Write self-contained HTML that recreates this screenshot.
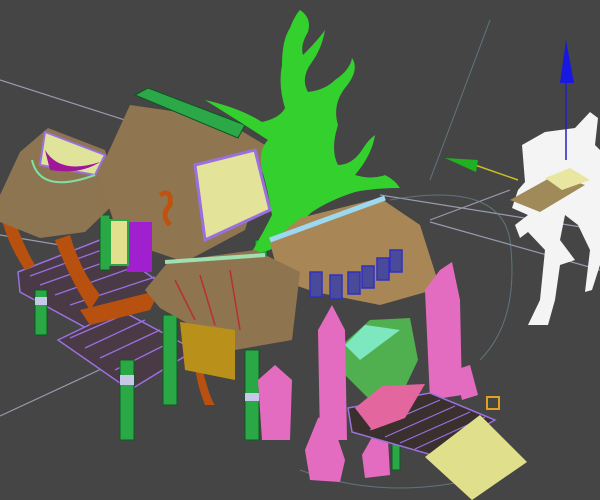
<!DOCTYPE html>
<html><head><meta charset="utf-8"><style>
html,body{margin:0;padding:0;background:#454545;width:600px;height:500px;overflow:hidden}
svg{display:block}
</style></head><body>
<svg width="600" height="500" viewBox="0 0 600 500" xmlns="http://www.w3.org/2000/svg">
<rect width="600" height="500" fill="#454545"/>
<g stroke="#a7a9c0" stroke-width="1.2" fill="none" opacity="0.85">
<line x1="0" y1="80" x2="350" y2="192"/>
<line x1="0" y1="235" x2="60" y2="245"/>
<line x1="0" y1="416" x2="110" y2="365"/>
<line x1="380" y1="195" x2="600" y2="230"/>
<line x1="430" y1="220" x2="510" y2="190"/>
<line x1="430" y1="222" x2="600" y2="270"/>
</g>
<g stroke="#6a8a95" stroke-width="1" fill="none" opacity="0.7">
<line x1="430" y1="180" x2="490" y2="20"/>
<path d="M390 200 Q500 180 510 240 Q520 320 480 360"/>
<path d="M300 470 Q380 500 470 480"/>
</g>
<polygon points="18,272 100,240 170,290 90,330 20,292" fill="#4a3a45" stroke="#9a70e0" stroke-width="1.5"/>
<g stroke="#9a70e0" stroke-width="1.3"><line x1="30" y1="276" x2="110" y2="247"/><line x1="40" y1="285" x2="125" y2="255"/><line x1="55" y1="295" x2="140" y2="265"/><line x1="70" y1="305" x2="155" y2="277"/></g>
<polygon points="58,340 120,310 195,350 130,390" fill="#4a3a45" stroke="#9a70e0" stroke-width="1.5"/>
<g stroke="#9a70e0" stroke-width="1.3"><line x1="70" y1="338" x2="130" y2="312"/><line x1="85" y1="348" x2="145" y2="320"/><line x1="100" y1="358" x2="160" y2="330"/><line x1="115" y1="370" x2="175" y2="340"/></g>
<path d="M10 205 Q20 240 35 265 L25 270 Q5 240 0 210Z" fill="#b8500f"/>
<path d="M55 240 Q70 280 90 310 L100 295 Q80 270 70 235Z" fill="#b8500f"/>
<path d="M80 310 L160 290 L150 310 L90 325Z" fill="#b8500f"/>
<path d="M200 360 Q210 400 215 405 L205 405 Q195 380 195 360Z" fill="#b8500f"/>
<g fill="#2aa845" stroke="#0d5a20" stroke-width="1">
<rect x="35" y="290" width="12" height="45"/>
<rect x="120" y="360" width="14" height="80"/>
<rect x="163" y="315" width="14" height="90"/>
<rect x="245" y="350" width="14" height="90"/>
<rect x="100" y="215" width="10" height="55"/>
<rect x="128" y="225" width="10" height="40"/>
<rect x="255" y="240" width="12" height="40"/>
<rect x="392" y="440" width="8" height="30"/>
</g>
<g fill="#c7c8e8"><rect x="35" y="297" width="12" height="8"/><rect x="120" y="375" width="14" height="10"/><rect x="245" y="393" width="14" height="8"/></g>
<polygon points="0,195 20,152 48,128 105,150 118,200 85,232 40,238 0,222" fill="#8d7552"/>
<polygon points="45,132 105,155 95,175 40,165" fill="#e0e39a" stroke="#9a70e0" stroke-width="2"/>
<path d="M45 150 Q60 175 100 162 Q80 175 50 170Z" fill="#a0179a"/>
<path d="M32 160 Q40 195 95 175" stroke="#80e0a0" stroke-width="2" fill="none"/>
<polygon points="98,175 130,105 220,118 270,148 245,230 185,262 120,240" fill="#8f7650"/>
<path d="M160 195 Q172 188 170 205 Q160 215 170 225" stroke="#c0520f" stroke-width="5" fill="none"/>
<rect x="127" y="222" width="25" height="50" fill="#a020d0"/>
<rect x="110" y="220" width="18" height="45" fill="#e2e08c" stroke="#2aa845" stroke-width="2"/>
<polygon points="195,165 255,150 270,210 205,240" fill="#e4e39a" stroke="#9a70e0" stroke-width="3"/>
<polygon points="135,95 148,88 245,125 238,138" fill="#2ca848" stroke="#0c5520" stroke-width="1"/>
<!-- green tree -->
<path d="M300 10 Q312 18 308 32 Q300 45 303 55 Q318 40 325 30 Q322 48 312 62 Q300 78 308 92 Q325 90 335 80 Q350 70 352 58 Q360 70 345 88 Q332 105 338 125 Q330 150 338 165 Q352 165 362 150 Q368 140 375 135 Q372 155 355 175 Q372 180 385 175 Q395 180 400 188 Q375 188 355 192 Q330 200 312 212 Q292 230 270 250 L250 255 Q262 235 272 215 Q268 190 262 170 Q258 150 268 140 Q245 125 205 100 Q240 108 262 122 Q280 118 285 108 Q278 85 282 65 Q282 40 290 28 Q295 15 300 10Z" fill="#34d12e"/>
<polygon points="270,243 300,218 380,198 420,225 440,288 380,305 315,292 280,280" fill="#a98656"/>
<g fill="#4a4a9a" stroke="#3030c0" stroke-width="1.5">
<rect x="310" y="272" width="12" height="25"/><rect x="330" y="275" width="12" height="24"/><rect x="348" y="272" width="12" height="22"/><rect x="362" y="266" width="12" height="22"/><rect x="377" y="258" width="12" height="22"/><rect x="390" y="250" width="12" height="22"/>
</g>
<line x1="270" y1="240" x2="385" y2="198" stroke="#9cd8f0" stroke-width="5"/>
<polygon points="145,290 168,262 255,250 300,272 292,340 235,350 160,308" fill="#8f7450"/>
<g stroke="#b83030" stroke-width="1.5" fill="none"><path d="M175 280 L195 320"/><path d="M200 275 L215 325"/><path d="M230 270 L240 330"/></g>
<line x1="165" y1="262" x2="265" y2="255" stroke="#a0e0b0" stroke-width="4"/>
<polygon points="180,322 235,330 235,380 185,370" fill="#b8901a"/>
<polygon points="342,345 370,320 410,318 418,360 400,398 370,400 345,375" fill="#50b050"/>
<polygon points="345,345 365,325 400,330 380,345 360,360" fill="#7de8c0"/>
<g fill="#e46cc0">
<polygon points="258,380 275,365 292,380 290,440 262,440"/>
<polygon points="318,330 332,305 345,330 347,440 320,440"/>
<polygon points="425,290 440,270 452,262 460,300 462,395 430,400"/>
<polygon points="455,370 470,365 478,395 462,400"/>
<polygon points="305,450 318,418 330,415 345,460 340,482 310,480"/>
<polygon points="362,455 375,432 388,440 390,475 365,478"/>
</g>
<polygon points="348,408 430,393 495,420 432,455 352,432" fill="#3a302d" stroke="#9a70e0" stroke-width="1.5"/>
<g stroke="#9a70e0" stroke-width="1.2"><line x1="370" y1="430" x2="440" y2="400"/><line x1="385" y1="437" x2="455" y2="406"/><line x1="400" y1="443" x2="470" y2="412"/><line x1="415" y1="449" x2="485" y2="417"/></g>
<polygon points="355,408 382,386 425,384 405,418 372,430" fill="#e4669e"/>
<polygon points="425,457 480,415 527,462 472,500" fill="#e0e08c"/>
<rect x="487" y="397" width="12" height="12" fill="none" stroke="#e0a020" stroke-width="2"/>
<!-- white tree -->
<path d="M522 145 L545 132 L575 128 L590 112 L598 118 L595 145 L600 150 L600 265 L592 290 L585 292 L590 250 L578 225 L565 215 L560 240 L575 260 L560 265 L555 300 L548 325 L528 325 L540 300 L545 250 L528 232 L520 238 L515 225 L528 215 L512 208 L518 190 L525 182 Z" fill="#f4f4f4"/>
<polygon points="510,200 555,175 585,185 540,212" fill="#a08a5a"/>
<polygon points="545,178 570,168 590,180 562,190" fill="#e8e6a0"/>
<line x1="566" y1="45" x2="566" y2="160" stroke="#2020c0" stroke-width="1.5"/>
<polygon points="566,40 560,83 574,83" fill="#1818e0"/>
<line x1="475" y1="165" x2="518" y2="180" stroke="#c8c020" stroke-width="1.5"/>
<polygon points="445,158 478,160 476,172" fill="#20b020"/>
</svg>
</body></html>
